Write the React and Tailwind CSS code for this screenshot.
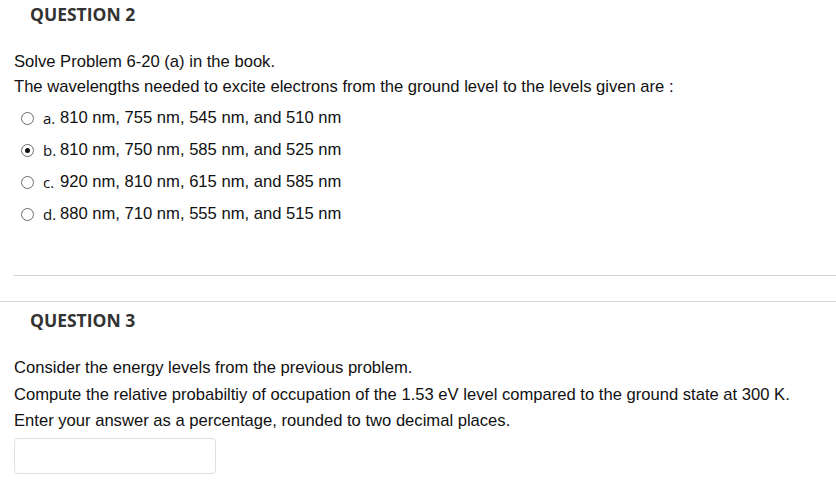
import React, { useState } from 'react';

const options = [
    { key: 'a', text: '810 nm, 755 nm, 545 nm, and 510 nm' },
    { key: 'b', text: '810 nm, 750 nm, 585 nm, and 525 nm' },
    { key: 'c', text: '920 nm, 810 nm, 615 nm, and 585 nm' },
    { key: 'd', text: '880 nm, 710 nm, 555 nm, and 515 nm' },
];

const Radio = ({ checked }) => (
    <span className="w-[13px] h-[13px] rounded-full border-[1.5px] border-[#6b6b6b] bg-white flex items-center justify-center shrink-0">
        {checked && <span className="w-[5px] h-[5px] rounded-full bg-[#111]"></span>}
    </span>
);

const App = () => {
    const [choice, setChoice] = useState('b');
    const [answer, setAnswer] = useState('');

    return (
        <div className="w-[836px] h-[500px] bg-white overflow-hidden font-['Liberation_Sans',Arial,sans-serif] text-[16.6px] text-[#111]">
            {/* question 2 */}
            <h2 className="pl-[30px] pt-[2px] leading-[24px] text-[17.5px] font-bold text-[#333] font-['Open_Sans',sans-serif]">
                QUESTION 2
            </h2>
            <div className="pl-[14px] mt-[23px] leading-[25px]">
                <p>Solve Problem 6-20 (a) in the book.</p>
                <p>The wavelengths needed to excite electrons from the ground level to the levels given are :</p>
            </div>
            <div className="mt-[3px] pl-[21px]">
                {options.map(o => (
                    <label key={o.key} className="flex items-center h-[32px] cursor-pointer" onClick={() => setChoice(o.key)}>
                        <Radio checked={choice === o.key} />
                        <span className="ml-[9px] w-[17px] font-['Open_Sans',sans-serif] text-[15px]">{o.key}.</span>
                        <span>{o.text}</span>
                    </label>
                ))}
            </div>
            <div className="ml-[14px] mt-[45px] border-t border-[#d4d4d4]"></div>

            {/* question 3 */}
            <div className="mt-[25px] border-t border-[#d4d4d4]"></div>
            <h2 className="pl-[30px] pt-[6px] leading-[24px] text-[17.5px] font-bold text-[#333] font-['Open_Sans',sans-serif]">
                QUESTION 3
            </h2>
            <div className="pl-[14px] mt-[23px] leading-[26.5px]">
                <p>Consider the energy levels from the previous problem.</p>
                <p>Compute the relative probabiltiy of occupation of the 1.53 eV level compared to the ground state at 300 K.</p>
                <p>Enter your answer as a percentage, rounded to two decimal places.</p>
            </div>
            <div className="pl-[14px] mt-[3px]">
                <input
                    type="text"
                    value={answer}
                    onChange={(e) => setAnswer(e.target.value)}
                    className="w-[202px] h-[36px] border border-[#dedede] rounded-[4px] outline-none px-2"
                />
            </div>
        </div>
    );
};

export default App;
